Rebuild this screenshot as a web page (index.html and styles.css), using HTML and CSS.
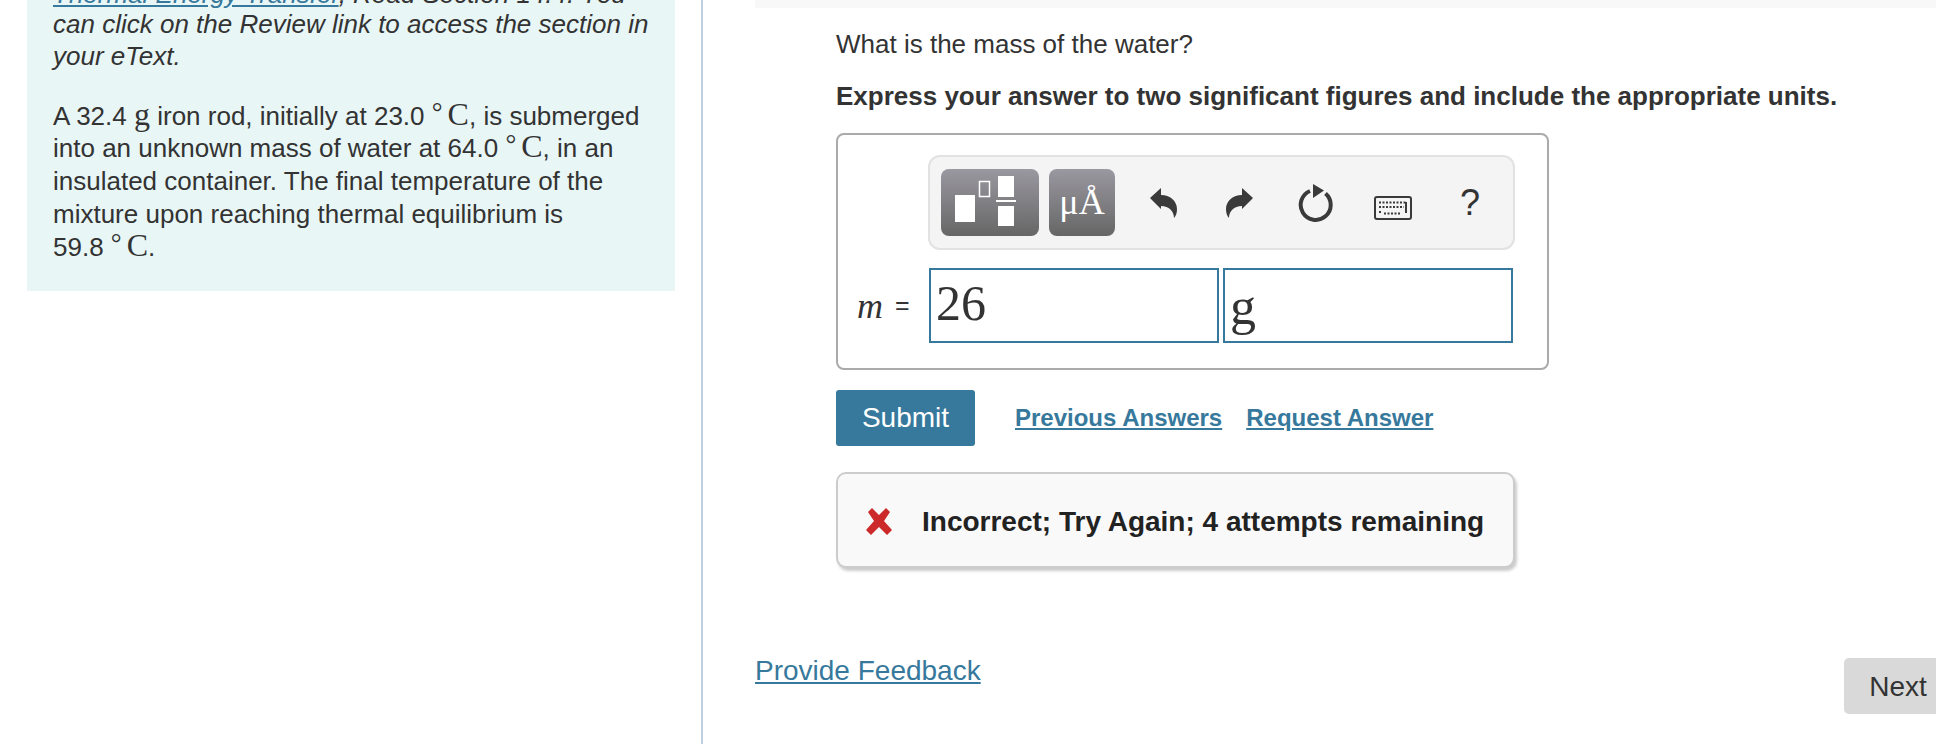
FILE: index.html
```html
<!DOCTYPE html>
<html lang="en">
<head>
<meta charset="utf-8">
<title>Mass of the water</title>
<link rel="stylesheet" href="styles.css">
</head>
<body>
<div class="page">
  <aside class="left">
    <div class="panel">
      <p class="intro"><span class="intro-first"><a href="#">Thermal Energy Transfer</a>, Read Section 14.4. You</span>can click on the Review link to access the section in<br>your eText.</p>
      <p class="problem">A 32.4 <span class="math">g</span> iron rod, initially at 23.0 <span class="math"><span class="deg">°</span>C</span>, is submerged<br>into an unknown mass of water at 64.0 <span class="math"><span class="deg">°</span>C</span>, in an<br>insulated container. The final temperature of the<br>mixture upon reaching thermal equilibrium is<br>59.8 <span class="math"><span class="deg">°</span>C</span>.</p>
    </div>
  </aside>
  <main class="right">
    <div class="strip"></div>
    <div class="content">
      <p class="question">What is the mass of the water?</p>
      <p class="instruction">Express your answer to two significant figures and include the appropriate units.</p>
      <section class="answer">
        <div class="toolbar">
          <button class="tool template" type="button" aria-label="Templates">
            <svg width="98" height="67" viewBox="0 0 98 67"><rect x="14" y="26" width="20" height="27" fill="#fff"/><rect x="38.500" y="12.500" width="10" height="15" fill="none" stroke="#fff" stroke-width="1.500"/><rect x="57" y="7" width="16" height="21" fill="#fff"/><rect x="55" y="31" width="20" height="2" fill="#fff"/><rect x="57" y="37" width="16" height="20" fill="#fff"/></svg>
          </button>
          <button class="tool units" type="button">μÅ</button>
          <svg class="icon undo" width="27" height="30" viewBox="0 0 27 30"><path d="M0 10 11 0V7C20 7 27 13 27 21 27 25 26 28 24 30 24 23 19 18 11 18V21Z" fill="#3a3a3a"/></svg>
          <svg class="icon redo" width="27" height="30" viewBox="0 0 27 30"><path d="M27 10 16 0V7C7 7 0 13 0 21 0 25 1 28 3 30 3 23 8 18 16 18V21Z" fill="#3a3a3a"/></svg>
          <svg class="icon refresh" width="35" height="38" viewBox="0 0 35 38"><path d="M12 7A15 15 0 1 0 27.500 9.500" fill="none" stroke="#3a3a3a" stroke-width="4"/><path d="M15 0 26 6.500 15 14Z" fill="#3a3a3a"/></svg>
          <svg class="icon keyboard" width="38" height="24" viewBox="0 0 38 24"><rect x="1" y="1" width="36" height="22" rx="2" fill="#f4f4f4" stroke="#3a3a3a" stroke-width="2"/><path d="M5 6.500H33M5 11H30M5 16H7.500M10 17.500H27M31 16H33" fill="none" stroke="#3a3a3a" stroke-width="2" stroke-dasharray="2 1.500"/><path d="M32 6V16" stroke="#3a3a3a" stroke-width="2"/></svg>
          <span class="help">?</span>
        </div>
        <div class="entry">
          <label class="var"><i>m</i> <span>=</span></label>
          <div class="field value">26</div>
          <div class="field unit">g</div>
        </div>
      </section>
      <div class="actions">
        <button class="submit" type="button">Submit</button>
        <a class="action-link first" href="#">Previous Answers</a>
        <a class="action-link" href="#">Request Answer</a>
      </div>
      <div class="feedback">
        <svg class="cross" width="28" height="27" viewBox="0 0 28 27"><path d="M3 4 7 0 14 7 21 0 25 4 19 13 27 22 22 27 14 19 6 27 1 22 9 13Z" fill="#cc2a2a"/></svg>
        <span class="feedback-text">Incorrect; Try Again; 4 attempts remaining</span>
      </div>
    </div>
    <div class="footer">
      <a class="provide" href="#">Provide Feedback</a>
      <button class="next" type="button">Next</button>
    </div>
  </main>
</div>
</body>
</html>
```
FILE: styles.css
```css
* { box-sizing: border-box; }
html, body { margin: 0; padding: 0; background: #fff; }
body { font-family: "Liberation Sans", Arial, sans-serif; color: #333; font-size: 26px; }
.page { display: flex; width: 1936px; height: 744px; overflow: hidden; }
p { margin: 0; }
a { color: #37799c; }

.left { width: 703px; flex: none; border-right: 2px solid #c0d0e0; padding-left: 27px; }
.panel { width: 648px; height: 313px; margin-top: -22px; background: #e8f6f6; padding: 0 0 0 26px; line-height: 32.500px; }
.intro { font-style: italic; white-space: nowrap; }
.intro-first { display: block; margin-bottom: -3px; }
.problem { margin-top: 27px; line-height: 32.750px; white-space: nowrap; }
.math { font-family: "Liberation Serif", serif; font-size: 32px; line-height: 0; }
.deg { margin-right: 5px; font-size: 27px; vertical-align: 4px; }

.right { flex: 1; padding-left: 52px; min-width: 0; }
.strip { height: 8px; background: #f8f8f8; }
.content { margin-left: 81px; }
.question { margin-top: 20px; line-height: 32px; }
.instruction { margin-top: 20px; line-height: 32px; font-weight: 700; white-space: nowrap; }

.answer { width: 713px; height: 237px; margin-top: 21px; border: 2px solid #aaa; border-radius: 8px; padding-top: 20px; }
.toolbar { display: flex; align-items: center; width: 587px; height: 95px; margin-left: 90px; padding-left: 11px; background: #f4f4f4; border: 2px solid #e2e2e2; border-radius: 12px; }
.tool { height: 67px; padding: 0; border: 0; border-radius: 8px; background: linear-gradient(#9a98a0, #666); color: #fff; }
.template { width: 98px; }
.template svg { display: block; }
.units { width: 66px; margin-left: 10px; font-family: "Liberation Serif", serif; font-size: 36px; line-height: 67px; }
.icon { flex: none; }
.undo { margin-left: 35px; }
.redo { margin-left: 49px; }
.refresh { margin-left: 45px; }
.keyboard { margin-left: 41px; margin-top: 10px; }
.help { margin-left: 48px; font-size: 36px; line-height: 1; }

.entry { display: flex; margin-top: 18px; }
.var { width: 91px; padding-left: 19px; display: flex; align-items: center; font-family: "Liberation Serif", serif; font-size: 36px; gap: 12px; }
.var span { font-family: "Liberation Sans", sans-serif; font-size: 25px; }
.field { width: 290px; height: 75px; border: 2px solid #37799c; font-family: "Liberation Serif", serif; font-size: 50px; line-height: 67px; padding-left: 5px; }
.unit { margin-left: 4px; font-size: 52px; line-height: 74px; padding-left: 5px; }

.actions { display: flex; align-items: center; margin-top: 20px; }
.submit { width: 139px; height: 56px; border: 0; border-radius: 3px; background: #37799c; color: #fff; font-family: inherit; font-size: 28px; }
.action-link { font-weight: 700; font-size: 24px; }
.first { margin-left: 40px; margin-right: 24px; }

.feedback { display: flex; align-items: center; width: 679px; height: 96px; margin-top: 26px; padding-left: 27px; gap: 29px; background: #f9f9f9; border: 2px solid #ccc; border-radius: 10px; box-shadow: 2px 3px 3px #ccc; font-weight: 700; font-size: 28px; color: #222; }
.cross { flex: none; margin-top: 2px; }
.feedback-text { margin-top: 4px; }

.footer { display: flex; justify-content: space-between; align-items: flex-start; margin-top: 82px; }
.provide { margin-top: 5px; font-size: 28px; line-height: 32px; }
.next { width: 92px; height: 56px; margin-top: 8px; padding: 2px 0 0 16px; border: 0; border-radius: 5px 0 0 5px; background: #d9d9d9; color: #333; font-family: inherit; font-size: 28px; }
```
